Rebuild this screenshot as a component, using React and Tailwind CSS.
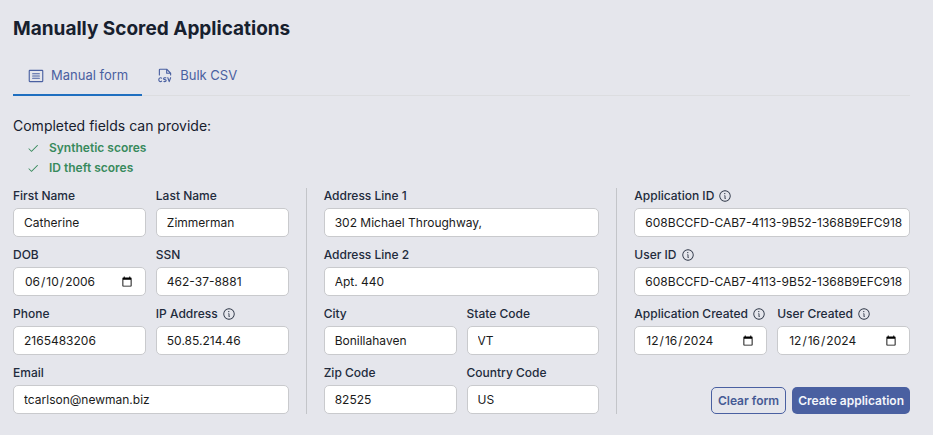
import { useState } from 'react'
import { PiArticle, PiCheck, PiFileCsv, PiInfo } from 'react-icons/pi'

const EMPTY_FORM = {
  firstName: '',
  lastName: '',
  dob: '',
  ssn: '',
  phone: '',
  ip: '',
  email: '',
  address1: '',
  address2: '',
  city: '',
  state: '',
  zip: '',
  country: '',
  applicationId: '',
  userId: '',
  applicationCreated: '',
  userCreated: '',
}

const INITIAL_FORM = {
  firstName: 'Catherine',
  lastName: 'Zimmerman',
  dob: '2006-06-10',
  ssn: '462-37-8881',
  phone: '2165483206',
  ip: '50.85.214.46',
  email: 'tcarlson@newman.biz',
  address1: '302 Michael Throughway,',
  address2: 'Apt. 440',
  city: 'Bonillahaven',
  state: 'VT',
  zip: '82525',
  country: 'US',
  applicationId: '608BCCFD-CAB7-4113-9B52-1368B9EFC918',
  userId: '608BCCFD-CAB7-4113-9B52-1368B9EFC918',
  applicationCreated: '2024-12-16',
  userCreated: '2024-12-16',
}

const TABS = [
  { id: 'manual', label: 'Manual form', icon: PiArticle },
  { id: 'csv', label: 'Bulk CSV', icon: PiFileCsv },
]

const SCORES = ['Synthetic scores', 'ID theft scores']

function Field({ name, label, type = 'text', info, wide, form, onChange }) {
  return (
    <div className={`flex min-w-0 flex-col gap-1 ${wide ? 'col-span-2' : ''}`}>
      <div className="flex items-center gap-1 text-[12px] leading-4 font-medium text-[#222b3c]">
        <label htmlFor={name} className="whitespace-nowrap">{label}</label>
        {info && <PiInfo className="size-3.5 shrink-0" />}
      </div>
      <input
        id={name}
        type={type}
        value={form[name]}
        onChange={(e) => onChange(name, e.target.value)}
        className={`h-[29px] w-full min-w-0 rounded-[5px] border border-[#c9cacd] bg-white pl-2.5 text-[12px] text-[#1a1a1a] outline-none focus:border-[#4a60a1] ${
          type === 'date' ? 'pr-2.5' : 'pr-1'
        }`}
      />
    </div>
  )
}

function Column({ children }) {
  return <div className="grid min-w-0 flex-1 grid-cols-2 content-start gap-2.5">{children}</div>
}

function Divider() {
  return <div className="w-px shrink-0 bg-[#c3c5c9]" />
}

export default function App() {
  const [tab, setTab] = useState('manual')
  const [form, setForm] = useState(INITIAL_FORM)

  const handleChange = (name, value) => setForm((prev) => ({ ...prev, [name]: value }))
  const field = { form, onChange: handleChange }

  return (
    <main className="min-h-screen bg-[#e5e6ec] pt-[17px] pr-[23px] pb-5 pl-[13px] font-['Inter',sans-serif] text-[#17202e]">
      <h1 className="text-[19px] leading-6 font-bold">Manually Scored Applications</h1>

      <div role="tablist" className="mt-[15px] flex border-b border-[#dcdde0]">
        {TABS.map(({ id, label, icon: Icon }) => (
          <button
            key={id}
            role="tab"
            aria-selected={tab === id}
            onClick={() => setTab(id)}
            className={`-mb-px flex h-10 items-center gap-1.5 border-b-2 px-3.5 pt-0.5 text-[13px] text-[#4a60a1] ${
              tab === id ? 'border-[#1f6fc0]' : 'border-transparent'
            }`}
          >
            <Icon className="size-[18px]" />
            {label}
          </button>
        ))}
      </div>

      <p className="mt-5 text-[14px] leading-5">Completed fields can provide:</p>
      <ul className="mt-0.5 pl-3.5 text-[12px] leading-5 font-semibold text-[#388a5c]">
        {SCORES.map((score) => (
          <li key={score} className="flex items-center gap-2.5">
            <PiCheck className="size-3" />
            {score}
          </li>
        ))}
      </ul>

      <form className="mt-2.5 flex gap-[17px]" onSubmit={(e) => e.preventDefault()}>
        <Column>
          <Field name="firstName" label="First Name" {...field} />
          <Field name="lastName" label="Last Name" {...field} />
          <Field name="dob" label="DOB" type="date" {...field} />
          <Field name="ssn" label="SSN" {...field} />
          <Field name="phone" label="Phone" {...field} />
          <Field name="ip" label="IP Address" info {...field} />
          <Field name="email" label="Email" type="email" wide {...field} />
        </Column>
        <Divider />
        <Column>
          <Field name="address1" label="Address Line 1" wide {...field} />
          <Field name="address2" label="Address Line 2" wide {...field} />
          <Field name="city" label="City" {...field} />
          <Field name="state" label="State Code" {...field} />
          <Field name="zip" label="Zip Code" {...field} />
          <Field name="country" label="Country Code" {...field} />
        </Column>
        <Divider />
        <div className="flex min-w-0 flex-1 flex-col justify-between">
          <div className="grid grid-cols-2 gap-2.5">
            <Field name="applicationId" label="Application ID" info wide {...field} />
            <Field name="userId" label="User ID" info wide {...field} />
            <Field name="applicationCreated" label="Application Created" type="date" info {...field} />
            <Field name="userCreated" label="User Created" type="date" info {...field} />
          </div>
          <div className="flex justify-end gap-1.5 text-[12px] font-semibold whitespace-nowrap">
            <button
              type="button"
              onClick={() => setForm(EMPTY_FORM)}
              className="h-[27px] rounded-[5px] border border-[#4a60a1] px-1.5 text-[#455a94]"
            >
              Clear form
            </button>
            <button type="submit" className="h-[27px] rounded-[5px] bg-[#4a60a1] px-1.5 text-[#f3f5fb]">
              Create application
            </button>
          </div>
        </div>
      </form>
    </main>
  )
}
